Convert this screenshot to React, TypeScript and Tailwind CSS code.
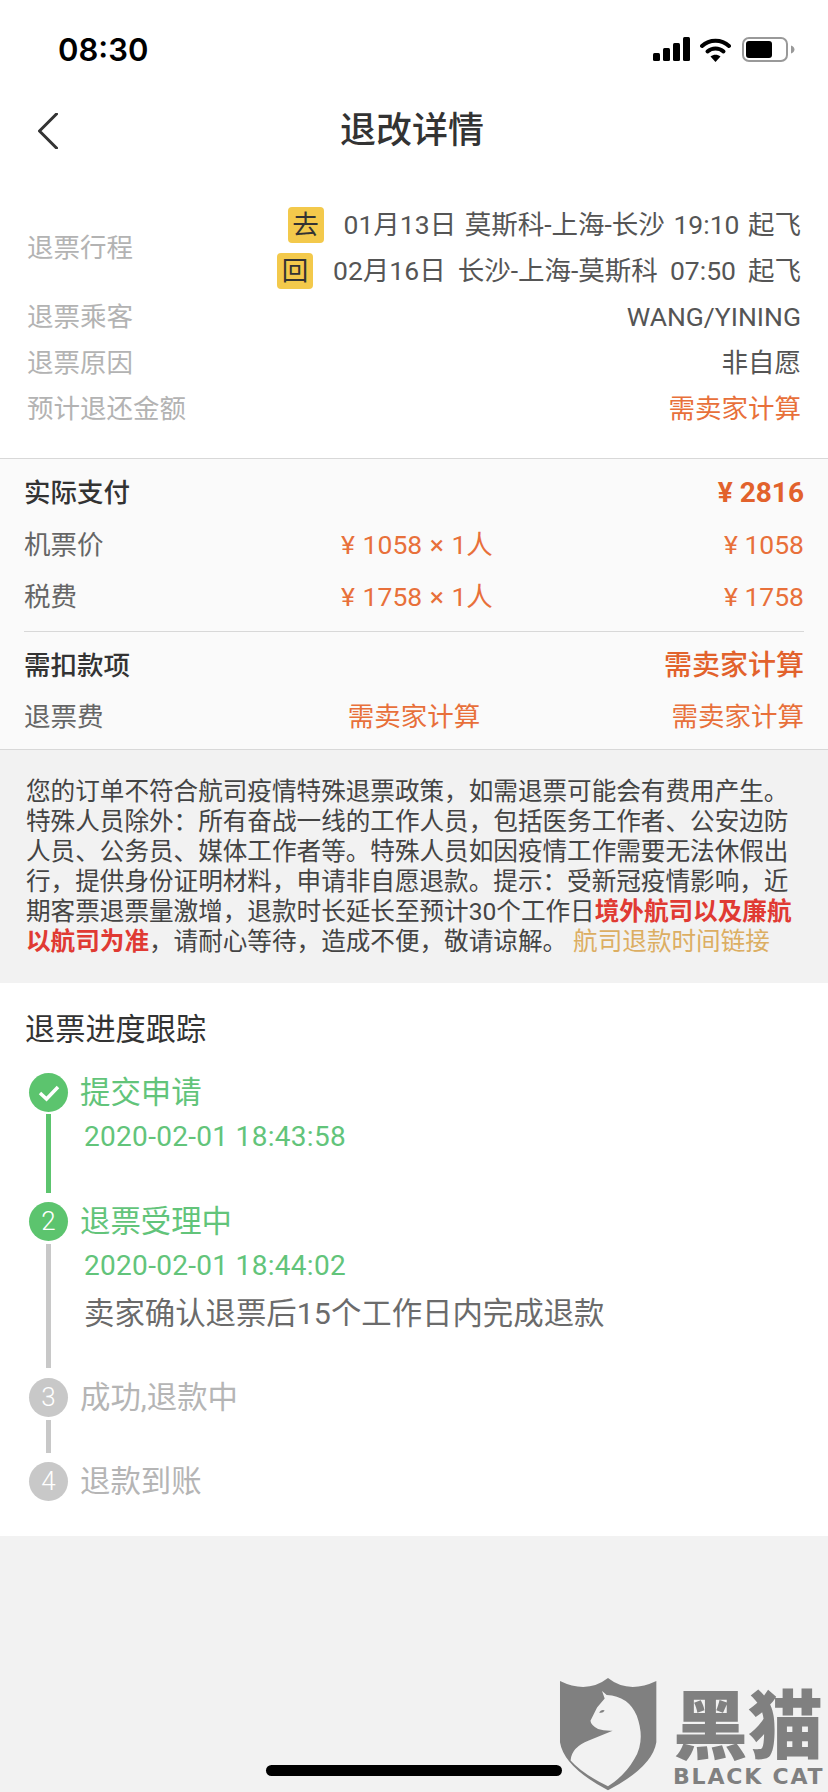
const infoRows = [
  { label: '退票乘客', value: 'WANG/YINING', tone: 'text-[#555555]' },
  { label: '退票原因', value: '非自愿', tone: 'text-[#555555]' },
  { label: '预计退还金额', value: '需卖家计算', tone: 'text-[#e8703a]' },
]

// the two routes don't set to the same width in the reference, hence the per-row spacing
const trips = [
  { tag: '去', text: '01月13日 莫斯科-上海-长沙 19:10 起飞', spacing: '[word-spacing:2px]' },
  { tag: '回', text: '02月16日 长沙-上海-莫斯科 07:50 起飞', spacing: '[word-spacing:5.5px]' },
]

function StatusBar() {
  return (
    <div className="flex h-[98px] items-center justify-between pl-[58px] pr-[33px]">
      <span className="font-['Inter',sans-serif] text-[31px] font-semibold leading-none text-black">08:30</span>
      <div className="flex items-center">
        <svg width="37" height="24" viewBox="0 0 37 24" className="mr-[10px]" aria-hidden="true">
          <rect x="0" y="16" width="7" height="8" rx="1.5" fill="#000" />
          <rect x="10" y="11" width="7" height="13" rx="1.5" fill="#000" />
          <rect x="20" y="6" width="7" height="18" rx="1.5" fill="#000" />
          <rect x="30" y="0" width="7" height="24" rx="1.5" fill="#000" />
        </svg>
        <svg width="31" height="25" viewBox="0 0 31 25" className="mr-[11px]" aria-hidden="true">
          <path d="M2 9 C9.5 2 21.5 2 29 9" fill="none" stroke="#000" strokeWidth="4" strokeLinecap="round" />
          <path d="M7.5 14.5 C12 10.5 19 10.5 23.5 14.5" fill="none" stroke="#000" strokeWidth="4" strokeLinecap="round" />
          <path d="M15.5 25 L10.5 19.5 C13.5 17 17.5 17 20.5 19.5 Z" fill="#000" />
        </svg>
        <svg width="53" height="25" viewBox="0 0 53 25" aria-hidden="true">
          <rect x="1" y="1" width="44" height="23" rx="6" fill="none" stroke="#999999" strokeWidth="2" />
          <rect x="4" y="4" width="26" height="17" rx="3" fill="#000" />
          <path d="M49 8.5 C51.5 9.5 52.5 11 52.5 12.5 C52.5 14 51.5 15.5 49 16.5 Z" fill="#999999" />
        </svg>
      </div>
    </div>
  )
}

function Shield() {
  return (
    <svg width="98" height="114" viewBox="90 73 296 344" aria-hidden="true">
      <path d="M93 85 Q175 125 238 76 Q300 125 384 85 L384 270 Q372 345 238 415 Q105 345 93 270 Z" fill="#808080" />
      <path d="M220 115 L234 127 Q300 130 325 190 Q352 265 318 320 Q290 370 238 403 Q160 365 125 325 Q128 285 180 265 Q215 250 252 235 Q225 236 208 230 Q186 218 185 205 L205 165 L228 138 Z" fill="#f2f2f2" />
      <path d="M211 180 Q219 170 228 174 Q222 184 211 180 Z" fill="#808080" />
    </svg>
  )
}

export default function App() {
  return (
    <div lang="zh-CN" className="relative min-h-[1792px] overflow-hidden bg-[#f2f2f2] font-['Roboto','Noto_Sans_CJK_SC',sans-serif]">
      <div className="bg-white">
        <StatusBar />

        <div className="grid h-[66px] grid-cols-[1fr_auto_1fr] items-center pl-[38px] pr-[42px]">
          <svg width="20" height="36" viewBox="0 0 20 36" aria-hidden="true">
            <path d="M18.5 1 L1.5 18 L18.5 35" fill="none" stroke="#333333" strokeWidth="3" strokeLinecap="round" strokeLinejoin="round" />
          </svg>
          <h1 className="text-[36px] font-medium leading-none text-[#333333]">退改详情</h1>
          <span />
        </div>

        <div className="pb-[26px] pl-[27px] pr-[27px] pt-[38px] text-[26.5px]">
          <div className="flex h-[92px] items-center justify-between">
            <span className="text-[#b3b3b3]">退票行程</span>
            <div className="flex flex-col items-end">
              {trips.map((trip) => (
                <div key={trip.tag} className="flex h-[46px] items-center gap-[20px] text-[#555555]">
                  <span className="flex h-[36px] w-[36px] items-center justify-center rounded-[4px] bg-[#f3c94b] text-[#333333]">
                    {trip.tag}
                  </span>
                  <span className={`whitespace-nowrap ${trip.spacing}`}>{trip.text}</span>
                </div>
              ))}
            </div>
          </div>
          {infoRows.map((row) => (
            <div key={row.label} className="flex h-[46px] items-center justify-between">
              <span className="text-[#b3b3b3]">{row.label}</span>
              <span className={row.tone}>{row.value}</span>
            </div>
          ))}
        </div>
      </div>

      <div className="border-y border-[#d8d8d8] bg-[#fafafa] pb-[7px] pl-[24px] pr-[24px] pt-[8px] text-[26.5px]">
        <div className="flex h-[52px] items-center justify-between">
          <span className="font-medium text-[#333333]">实际支付</span>
          <span className="text-[28px] font-bold text-[#e2622c]">¥ 2816</span>
        </div>
        <div className="grid h-[52px] grid-cols-3 items-center">
          <span className="text-[#666666]">机票价</span>
          <span className="pl-[6px] text-center text-[#e8703a] [word-spacing:1px]">¥ 1058 × 1人</span>
          <span className="text-right text-[#e8703a]">¥ 1058</span>
        </div>
        <div className="grid h-[52px] grid-cols-3 items-center">
          <span className="text-[#666666]">税费</span>
          <span className="pl-[6px] text-center text-[#e8703a] [word-spacing:1px]">¥ 1758 × 1人</span>
          <span className="text-right text-[#e8703a]">¥ 1758</span>
        </div>
        <div className="mt-[8px] border-t border-[#d8d8d8] pt-[8px]">
          <div className="flex h-[52px] items-center justify-between">
            <span className="font-medium text-[#333333]">需扣款项</span>
            <span className="text-[28px] font-medium text-[#e2622c]">需卖家计算</span>
          </div>
          <div className="grid h-[50px] grid-cols-3 items-center">
            <span className="text-[#666666]">退票费</span>
            <span className="text-center text-[#e8703a]">需卖家计算</span>
            <span className="text-right text-[#e8703a]">需卖家计算</span>
          </div>
        </div>
      </div>

      <p className="whitespace-nowrap bg-[#f2f2f2] pb-[26px] pl-[26px] pt-[27px] text-[24.6px] leading-[30px] text-[#444444]">
        您的订单不符合航司疫情特殊退票政策，如需退票可能会有费用产生。<br />
        特殊人员除外：所有奋战一线的工作人员，包括医务工作者、公安边防<br />
        人员、公务员、媒体工作者等。特殊人员如因疫情工作需要无法休假出<br />
        行，提供身份证明材料，申请非自愿退款。提示：受新冠疫情影响，近<br />
        期客票退票量激增，退款时长延长至预计30个工作日
        <span className="font-bold text-[#e03a33]">境外航司以及廉航<br />以航司为准</span>
        ，请耐心等待，造成不便，敬请谅解。
        <span className="ml-[6px] text-[#dcae62]">航司退款时间链接</span>
      </p>

      <div className="bg-white pb-[35px] pl-[29px] pt-[25px]">
        <h2 className="-ml-[4px] mb-[21px] h-[44px] text-[30.2px] leading-[44px] text-[#333333]">退票进度跟踪</h2>

        <div className="flex h-[129px]">
          <div className="flex w-[39px] flex-col items-center">
            <span className="flex h-[39px] w-[39px] items-center justify-center rounded-full bg-[#5cc46e]">
              <svg width="22" height="18" viewBox="0 0 22 18" aria-hidden="true">
                <path d="M2 9 L8.5 15 L20 3" fill="none" stroke="#ffffff" strokeWidth="3.5" />
              </svg>
            </span>
            <span className="mb-[9px] mt-[2px] w-[5px] flex-1 bg-[#5cc46e]" />
          </div>
          <div className="ml-[12px]">
            <div className="h-[39px] text-[30.4px] leading-[39px] text-[#62c47a]">提交申请</div>
            <div className="h-[50px] pl-[4px] text-[28px] leading-[50px] tracking-[0.3px] text-[#62c47a]">2020-02-01 18:43:58</div>
          </div>
        </div>

        <div className="flex h-[176px]">
          <div className="flex w-[39px] flex-col items-center">
            <span className="flex h-[39px] w-[39px] items-center justify-center rounded-full bg-[#5cc46e] text-[26px] font-light text-white">2</span>
            <span className="mb-[10px] mt-[3px] w-[5px] flex-1 bg-[#c8c8c8]" />
          </div>
          <div className="ml-[12px]">
            <div className="h-[39px] text-[30.4px] leading-[39px] text-[#62c47a]">退票受理中</div>
            <div className="h-[50px] pl-[4px] text-[28px] leading-[50px] tracking-[0.3px] text-[#62c47a]">2020-02-01 18:44:02</div>
            <div className="h-[46px] pl-[4px] text-[30.4px] leading-[46px] text-[#6b6b6b]">卖家确认退票后15个工作日内完成退款</div>
          </div>
        </div>

        <div className="flex h-[84px]">
          <div className="flex w-[39px] flex-col items-center">
            <span className="flex h-[39px] w-[39px] items-center justify-center rounded-full bg-[#c8c8c8] text-[26px] font-light text-white">3</span>
            <span className="mb-[9px] mt-[3px] w-[5px] flex-1 bg-[#c8c8c8]" />
          </div>
          <div className="ml-[12px] h-[39px] text-[30.4px] leading-[39px] text-[#b5b5b5]">成功,退款中</div>
        </div>

        <div className="flex h-[39px]">
          <span className="flex h-[39px] w-[39px] items-center justify-center rounded-full bg-[#c8c8c8] text-[26px] font-light text-white">4</span>
          <div className="ml-[12px] h-[39px] text-[30.4px] leading-[39px] text-[#b5b5b5]">退款到账</div>
        </div>
      </div>

      {/* watermark + home indicator sit over the page */}
      <div className="absolute left-[266px] top-[1765px] h-[11px] w-[296px] rounded-full bg-black" />
      <div className="absolute left-[559px] top-[1677px]">
        <Shield />
      </div>
      <div className="absolute left-[673px] top-[1687px] h-[68px] whitespace-nowrap font-['Noto_Sans_CJK_SC',sans-serif] text-[75px] font-black leading-[68px] text-[#808080]">
        黑猫
      </div>
      <div className="absolute left-[673px] top-[1764px] whitespace-nowrap font-['DejaVu_Sans',sans-serif] text-[22px] font-bold leading-[26px] tracking-[1.8px] text-[#808080]">
        BLACK CAT
      </div>
    </div>
  )
}
